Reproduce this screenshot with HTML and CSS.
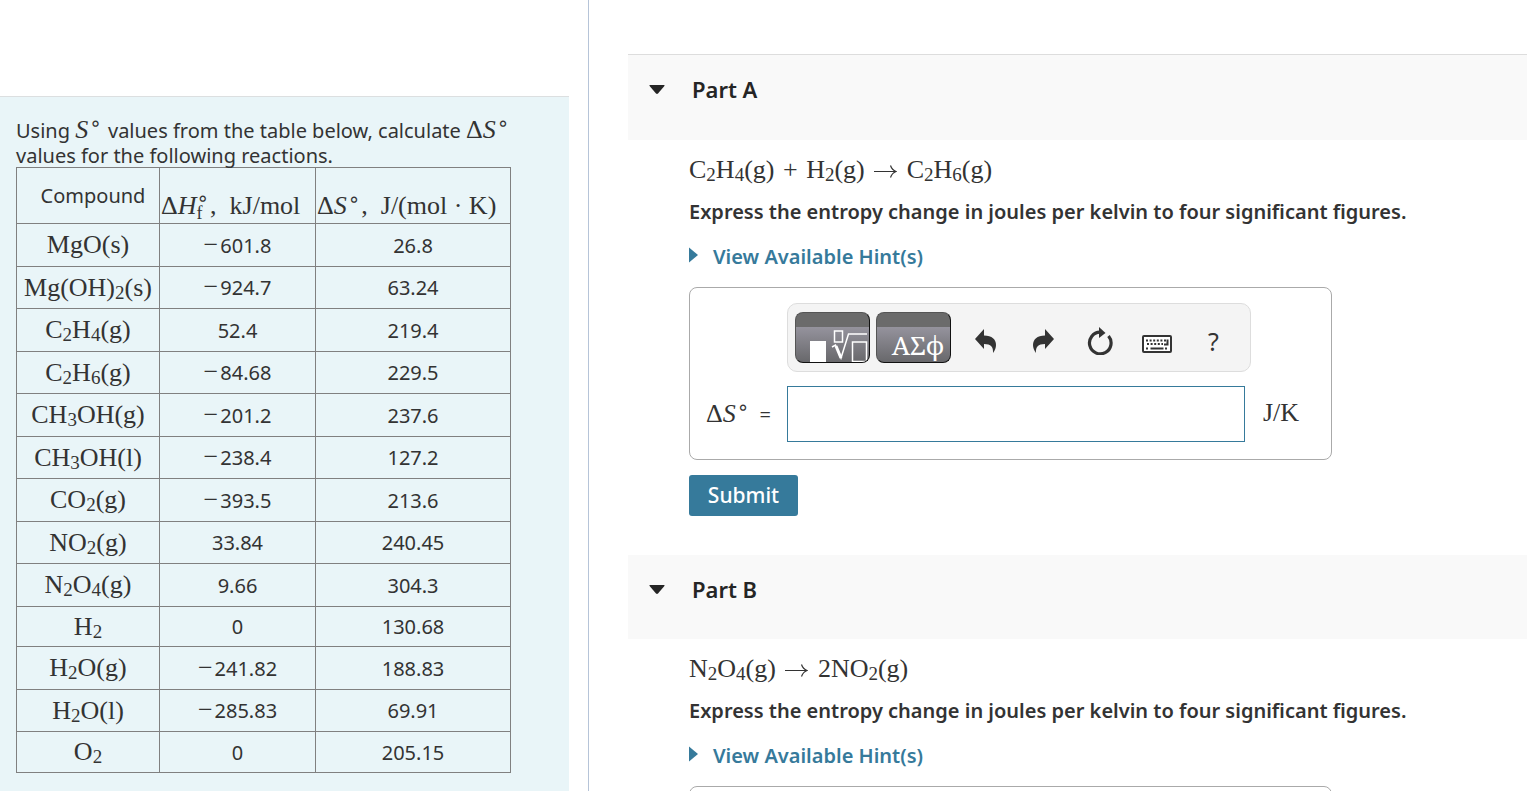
FILE: index.html
```
<!DOCTYPE html>
<html lang="en">
<head>
<meta charset="utf-8">
<meta name="viewport" content="width=device-width, initial-scale=1">
<title>Entropy of reaction</title>
<link rel="stylesheet" href="styles.css">
</head>
<body>
<div class="layout">
  <aside class="side">
    <section class="intro">
      <p class="intro-text">Using <span class="math"><i>S</i><sup class="deg">∘</sup></span> values from the table below, calculate <span class="math">Δ<i>S</i><sup class="deg">∘</sup></span> values for the following reactions.</p>
      <table class="data">
        <colgroup><col class="col-name"><col class="col-h"><col class="col-s"></colgroup>
        <thead>
          <tr>
            <th scope="col" class="compound">Compound</th>
            <th scope="col" class="unit math">Δ<i>H</i><span class="stack"><span class="deg">∘</span><span>f</span></span>,&ensp;kJ/mol</th>
            <th scope="col" class="unit math">Δ<i>S</i><sup class="deg">∘</sup>,&ensp;J/(mol · K)</th>
          </tr>
        </thead>
        <tbody>
          <tr><td class="math">MgO(s)</td><td><span class="minus">−</span>601.8</td><td>26.8</td></tr>
          <tr><td class="math">Mg(OH)<sub>2</sub>(s)</td><td><span class="minus">−</span>924.7</td><td>63.24</td></tr>
          <tr><td class="math">C<sub>2</sub>H<sub>4</sub>(g)</td><td>52.4</td><td>219.4</td></tr>
          <tr><td class="math">C<sub>2</sub>H<sub>6</sub>(g)</td><td><span class="minus">−</span>84.68</td><td>229.5</td></tr>
          <tr><td class="math">CH<sub>3</sub>OH(g)</td><td><span class="minus">−</span>201.2</td><td>237.6</td></tr>
          <tr><td class="math">CH<sub>3</sub>OH(l)</td><td><span class="minus">−</span>238.4</td><td>127.2</td></tr>
          <tr><td class="math">CO<sub>2</sub>(g)</td><td><span class="minus">−</span>393.5</td><td>213.6</td></tr>
          <tr><td class="math">NO<sub>2</sub>(g)</td><td>33.84</td><td>240.45</td></tr>
          <tr><td class="math">N<sub>2</sub>O<sub>4</sub>(g)</td><td>9.66</td><td>304.3</td></tr>
          <tr class="short"><td class="math">H<sub>2</sub></td><td>0</td><td>130.68</td></tr>
          <tr><td class="math">H<sub>2</sub>O(g)</td><td><span class="minus">−</span>241.82</td><td>188.83</td></tr>
          <tr><td class="math">H<sub>2</sub>O(l)</td><td><span class="minus">−</span>285.83</td><td>69.91</td></tr>
          <tr class="last"><td class="math">O<sub>2</sub></td><td>0</td><td>205.15</td></tr>
        </tbody>
      </table>
    </section>
  </aside>

  <main class="parts">
    <section class="part">
      <header class="part-head">
        <button type="button" class="toggle" aria-label="Collapse Part A"><svg width="16" height="10" viewBox="0 0 16 10"><path d="M1 0h14q1 0 .4.9L9 8.500q-1 .9-2 0L.6.9Q0 0 1 0z" fill="#252525"/></svg></button>
        <h2>Part A</h2>
      </header>
      <div class="part-body">
        <p class="equation math">C<sub>2</sub>H<sub>4</sub>(g) <span class="op">+</span> H<sub>2</sub>(g) <svg class="arrow" role="img" aria-label="yields" width="23" height="14" viewBox="0 0 23 14"><path d="M0 7.500h21.500M16.500 1.500q1.500 4.500 5.500 6-4 1.500-5.500 6" fill="none" stroke="#333" stroke-width="1.200"/></svg> C<sub>2</sub>H<sub>6</sub>(g)</p>
        <p class="prompt">Express the entropy change in joules per kelvin to four significant figures.</p>
        <a class="hint" href="#hints-a"><svg width="9" height="16" viewBox="0 0 9 16"><path d="M0 .5 9 8l-9 7.500z" fill="#367a9b"/></svg>View Available Hint(s)</a>
        <div class="answer">
          <div class="toolbar">
            <button type="button" class="palette" aria-label="Templates"><svg width="73" height="49" viewBox="0 0 73 49"><path d="M14 28h16v21H14z" fill="#fff"/><g fill="none" stroke="#fff" stroke-width="1.500"><path d="M38.500 18h8v11h-8z"/><path d="M56.500 29h14v19.500h-14z"/><path d="M36 34l3.500-2 5.500 13 7.500-24H71"/><path d="M40 33l5 12" stroke-width="3"/></g></svg></button>
            <button type="button" class="palette greek">ΑΣϕ</button>
            <div class="tools">
              <button type="button" aria-label="Undo"><svg width="22" height="24" viewBox="0 0 22 24"><path d="M0 10 9 0v6.500c8 0 12 4 12 9.500 0 3-1 5-3 8 .5-6-2-9-9-9v5z" fill="#333"/></svg></button>
              <button type="button" aria-label="Redo"><svg width="22" height="24" viewBox="0 0 22 24"><path d="M22 10 13 0v6.500C5 6.500 1 10.500 1 16c0 3 1 5 3 8-.5-6 2-9 9-9v5z" fill="#333"/></svg></button>
              <button type="button" aria-label="Reset"><svg width="26" height="28" viewBox="0 0 26 28"><path d="M13 5.200A10.800 10.800 0 1 0 21.500 9" fill="none" stroke="#333" stroke-width="3.200"/><path d="M12 0l6.500 6L12 11z" fill="#333"/></svg></button>
              <button type="button" aria-label="Keyboard shortcuts"><svg class="keyboard" width="30" height="18" viewBox="0 0 30 18"><rect x="1" y="1" width="28" height="16" rx="1" fill="#fff" stroke="#333" stroke-width="2"/><path d="M4 5.500h20M5 9h16M4 13.500h3M23 13.500h3" stroke="#333" stroke-width="2" stroke-dasharray="2 1.600"/><path d="M8.500 13.500h13" stroke="#333" stroke-width="2"/><path d="M25.500 4.500v5H22" fill="none" stroke="#333" stroke-width="2"/></svg></button>
              <button type="button" class="help" aria-label="Help">?</button>
            </div>
          </div>
          <label class="quantity" for="answer-a"><span class="math">Δ<i>S</i><sup class="deg">∘</sup></span> <span class="equals">=</span></label>
          <input class="field" id="answer-a" type="text">
          <span class="result-unit math">J/K</span>
        </div>
        <button type="submit" class="submit">Submit</button>
      </div>
    </section>

    <section class="part">
      <header class="part-head">
        <button type="button" class="toggle" aria-label="Collapse Part B"><svg width="16" height="10" viewBox="0 0 16 10"><path d="M1 0h14q1 0 .4.9L9 8.500q-1 .9-2 0L.6.9Q0 0 1 0z" fill="#252525"/></svg></button>
        <h2>Part B</h2>
      </header>
      <div class="part-body">
        <p class="equation math">N<sub>2</sub>O<sub>4</sub>(g) <svg class="arrow" role="img" aria-label="yields" width="23" height="14" viewBox="0 0 23 14"><path d="M0 7.500h21.500M16.500 1.500q1.500 4.500 5.500 6-4 1.500-5.500 6" fill="none" stroke="#333" stroke-width="1.200"/></svg> 2NO<sub>2</sub>(g)</p>
        <p class="prompt">Express the entropy change in joules per kelvin to four significant figures.</p>
        <a class="hint" href="#hints-b"><svg width="9" height="16" viewBox="0 0 9 16"><path d="M0 .5 9 8l-9 7.500z" fill="#367a9b"/></svg>View Available Hint(s)</a>
        <div class="answer"></div>
      </div>
    </section>
  </main>
</div>
</body>
</html>
```
FILE: styles.css
```
* { box-sizing: border-box; }

body {
  margin: 0;
  background: #fff;
  color: #333;
  font: 20px/25px "Noto Sans", "Open Sans", sans-serif;
}

p, h2 { margin: 0; }

button { padding: 0; border: 0; background: none; color: inherit; font: inherit; }

.layout { display: flex; height: 100vh; overflow: hidden; }

/* Left column */
.side {
  flex: 0 0 589px;
  padding: 96px 19px 0 0;
  border-right: 1px solid #b6c4d8;
}

.intro {
  height: 100%;
  padding: 21px 16px 0;
  border-top: 1px solid #dcdfe0;
  background: #e9f5f8;
}
.intro-text { margin-bottom: -1px; }
.intro-text .math { line-height: 0; }

.math { font-family: "Liberation Serif", serif; font-size: 26px; }
.math sub { font-size: 19px; line-height: 0; vertical-align: -3px; }
.deg { margin: 0 1px; font-family: "DejaVu Sans", sans-serif; font-size: 20px; line-height: 0; vertical-align: 8px; }

.data {
  width: 495px;
  border-collapse: collapse;
  table-layout: fixed;
  text-align: center;
}
.col-name { width: 143px; }
.col-h { width: 156px; }
.data th, .data td { padding: 0; border: 1px solid #808080; font-weight: 400; white-space: nowrap; }
.data thead tr { height: 56px; }
.data tbody tr { height: 42px; }
.data tbody tr:nth-child(odd) { height: 43px; }
.data tbody tr.short { height: 40px; }
.data tbody tr.last { height: 41px; }
.data .compound { padding-left: 10px; }
.data td.math { padding-bottom: 1px; }
.data .unit { padding: 21px 0 0 1px; line-height: 32px; text-align: left; }
.minus { margin-right: 2px; font-family: "Liberation Serif", serif; font-size: 26px; line-height: 0; }
.stack { display: inline-flex; flex-direction: column; height: 24px; vertical-align: 9px; font-size: 18px; line-height: 15px; }
.stack .deg { margin-left: 0; line-height: 15px; }

/* Right column */
.parts { flex: 1; min-width: 0; padding: 54px 0 0 39px; }

.part-head {
  display: flex;
  align-items: flex-start;
  height: 84px;
  padding: 21px 0 0 21px;
  background: #f9f9f9;
  color: #252525;
}
.part:first-child .part-head { height: 86px; border-top: 1px solid #ddd; }
.toggle { display: flex; align-items: center; width: 43px; height: 28px; }
.part-head h2 { font-size: 22px; font-weight: 600; line-height: 27px; }

.part-body { padding: 12px 0 39px 61px; }
.equation { line-height: 36px; }
.op { margin: 0 2px; }
.arrow { margin: 0 3px; }
.prompt { margin-top: 10px; font-weight: 600; line-height: 27px; white-space: nowrap; }
.hint {
  display: flex;
  align-items: center;
  gap: 15px;
  width: max-content;
  margin-top: 18px;
  color: #367a9b;
  font-weight: 600;
  line-height: 27px;
  text-decoration: none;
}
.hint svg { margin-bottom: 4px; }

.answer {
  display: grid;
  grid-template-columns: 81px 458px 1fr;
  row-gap: 14px;
  align-items: center;
  max-width: 643px;
  min-height: 173px;
  margin-top: 17px;
  padding: 15px 16px 17px;
  border: 1px solid #aaa;
  border-radius: 8px;
}
.toolbar {
  grid-column: 2 / 4;
  display: flex;
  gap: 6px;
  width: 464px;
  height: 69px;
  padding: 8px 7px;
  border: 1px solid #ddd;
  border-radius: 10px;
  background: #f4f4f4;
}
.palette {
  flex: none;
  width: 75px;
  height: 51px;
  overflow: hidden;
  border: 1px solid #111;
  border-top-color: #555;
  border-left-color: #555;
  border-radius: 8px;
  background: linear-gradient(#6b6b6b 0 14px, #95939d 14px, #68686b);
}
.palette svg { display: block; }
.greek { padding: 14px 0 0 9px; color: #fff; font: 26px/34px "Noto Serif", "Liberation Serif", serif; }
.tools { display: flex; }
.tools button { display: flex; align-items: center; justify-content: center; width: 57px; height: 51px; padding-top: 7px; }
.keyboard { margin-top: 6px; }
.help { font-size: 25px; }
.quantity { white-space: nowrap; }
.equals { margin-left: 4px; }
.field { width: 100%; height: 56px; border: 1px solid #367a9b; background: #fff; font: inherit; }
.result-unit { padding: 0 0 4px 18px; }

.submit {
  display: block;
  width: 109px;
  height: 41px;
  margin-top: 15px;
  border-radius: 3px;
  background: #367a9b;
  color: #fff;
  font-size: 21px;
  font-weight: 500;
}
```
